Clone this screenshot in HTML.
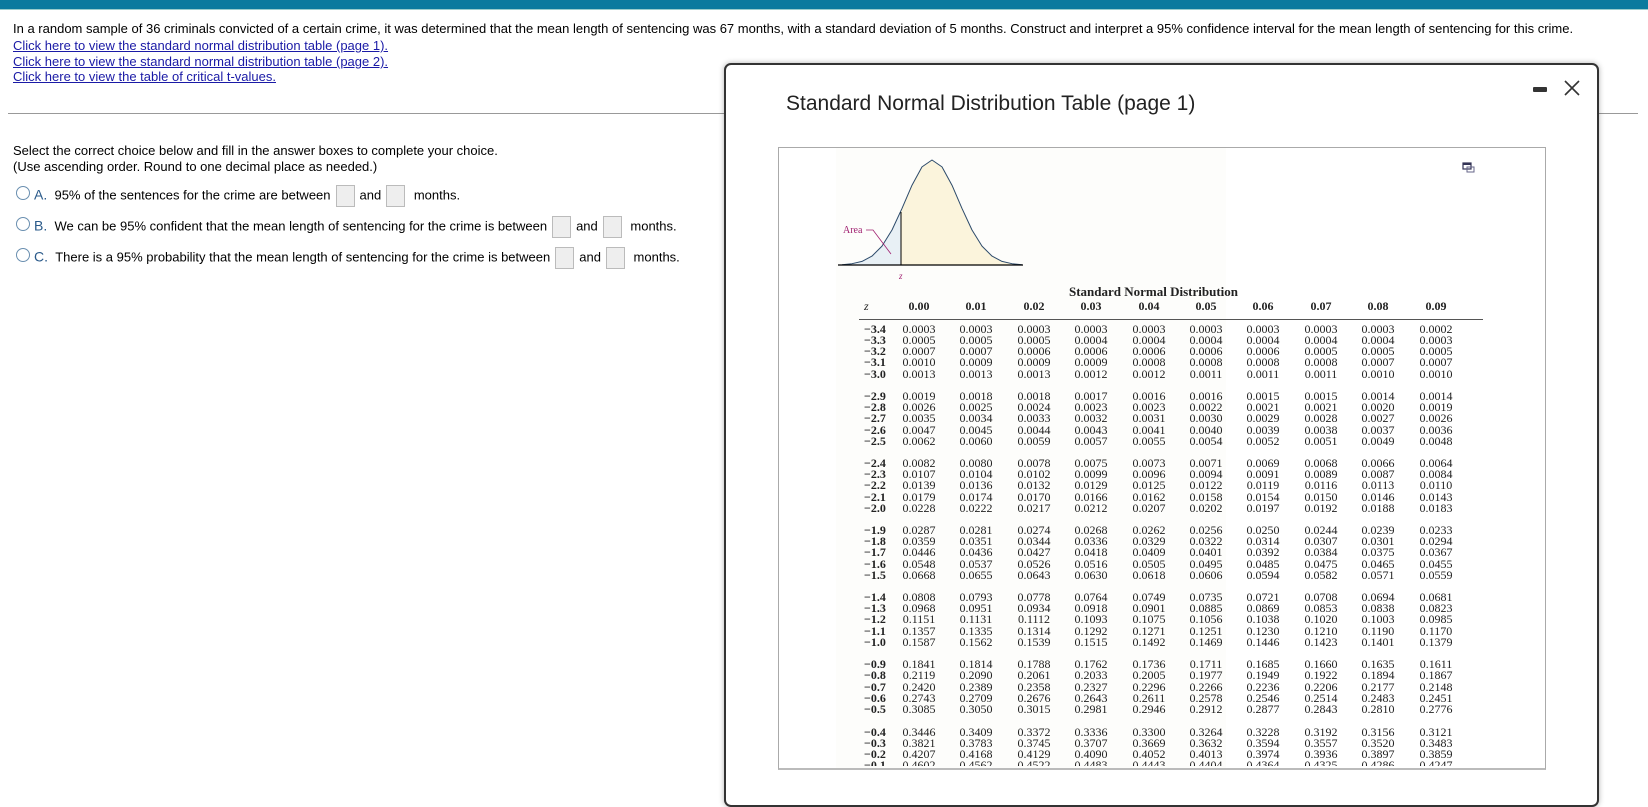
<!DOCTYPE html><html><head><meta charset="utf-8"><style>
body{margin:0;width:1648px;height:779px;overflow:hidden;background:#fff;font-family:"Liberation Sans",Arial,sans-serif;position:relative}
.bar{position:absolute;left:0;top:0;width:1648px;height:9px;background:#0b7a9e;border-bottom:1px solid #9cc}
.t{position:absolute;font-size:13px;line-height:15px;color:#000;white-space:nowrap}
a{color:#1a1aa6;text-decoration:underline}
.box{display:inline-block;width:17px;height:20px;border:1px solid #bbb;background:#eee;vertical-align:middle;margin:0 5px}
.rad{display:inline-block;width:12px;height:12px;border:1px solid #6a8fb0;border-radius:50%;vertical-align:-1px;margin-right:4px}
.lbl{color:#2a5a8a;font-size:14px}
.modal{position:absolute;left:724px;top:63px;width:871px;height:740px;border:2px solid #333;border-radius:7px;background:#fff;box-shadow:0 0 6px rgba(0,0,0,.3)}
.inner{position:absolute;left:778px;top:147px;width:766px;height:620px;border:1px solid #aaa;border-bottom:2px solid #bbb;background:#fff;overflow:hidden}
.r{position:absolute;left:0;width:760px;height:11px;font-family:"Liberation Serif",serif;font-size:12px;line-height:11px;color:#222;white-space:nowrap}
.r span{position:absolute;width:50px;text-align:center}
.r b{position:absolute;left:85px}
.r span:nth-of-type(1){left:115px}.r span:nth-of-type(2){left:172px}.r span:nth-of-type(3){left:230px}.r span:nth-of-type(4){left:287px}.r span:nth-of-type(5){left:345px}
.r span:nth-of-type(6){left:402px}.r span:nth-of-type(7){left:459px}.r span:nth-of-type(8){left:517px}.r span:nth-of-type(9){left:574px}.r span:nth-of-type(10){left:632px}
</style></head><body>
<div class="bar"></div>
<div class="t" style="left:13px;top:21px">In a random sample of 36 criminals convicted of a certain crime, it was determined that the mean length of sentencing was 67 months, with a standard deviation of 5 months. Construct and interpret a 95% confidence interval for the mean length of sentencing for this crime.</div>
<div class="t" style="left:13px;top:38px"><a>Click here to view the standard normal distribution table (page 1).</a></div>
<div class="t" style="left:13px;top:54px"><a>Click here to view the standard normal distribution table (page 2).</a></div>
<div class="t" style="left:13px;top:69px"><a>Click here to view the table of critical t-values.</a></div>
<div style="position:absolute;left:8px;top:113px;width:1630px;height:1px;background:#999"></div>
<div class="t" style="left:13px;top:143px">Select the correct choice below and fill in the answer boxes to complete your choice.</div>
<div class="t" style="left:13px;top:159px">(Use ascending order. Round to one decimal place as needed.)</div>
<div class="t" style="left:16px;top:185px"><span class="rad"></span><span class="lbl">A.</span>&nbsp;&nbsp;95% of the sentences for the crime are between<span class="box"></span>and<span class="box"></span>&nbsp;months.</div>
<div class="t" style="left:16px;top:216px"><span class="rad"></span><span class="lbl">B.</span>&nbsp;&nbsp;We can be 95% confident that the mean length of sentencing for the crime is between<span class="box"></span>and<span class="box"></span>&nbsp;months.</div>
<div class="t" style="left:16px;top:247px"><span class="rad"></span><span class="lbl">C.</span>&nbsp;&nbsp;There is a 95% probability that the mean length of sentencing for the crime is between<span class="box"></span>and<span class="box"></span>&nbsp;months.</div>
<div class="modal"></div>
<div class="t" style="left:786px;top:92px;font-size:21px;line-height:24px;color:#222">Standard Normal Distribution Table (page 1)</div>
<div style="position:absolute;left:1533px;top:87px;width:14px;height:5px;background:#333;border-radius:1px"></div>
<svg style="position:absolute;left:1563px;top:79px" width="18" height="18"><path d="M2 2L16 16M16 2L2 16" stroke="#333" stroke-width="1.6"/></svg>
<div class="inner">
<div style="position:absolute;left:57px;top:0;width:390px;height:620px;background:#fdfdfb"></div>
<svg style="position:absolute;left:683px;top:14px" width="14" height="12"><rect x="1" y="1" width="8" height="6" fill="none" stroke="#335" stroke-width="1.2"/><rect x="1" y="1" width="8" height="2" fill="#335"/><rect x="5" y="5" width="7" height="5" fill="none" stroke="#668" stroke-width="1"/></svg>
<svg style="position:absolute;left:0;top:0" width="260" height="150">
<path d="M73 117 L73 115.7 L83 113.4 L93 108.1 L103 98.1 L113 82 L123 60.4 L133 37.2 L143 18.9 L153 12 L163 18.9 L173 37.2 L183 60.4 L193 82 L203 98.1 L213 108.1 L223 113.4 L233 115.7 L233 117 Z" fill="#fbf4dc"/>
<path d="M73 117 L73 115.7 L83 113.4 L93 108.1 L103 98.1 L113 82 L122 63 L122 117 Z" fill="#e8f0f5"/>
<path d="M63 116.8 L73 115.7 L83 113.4 L93 108.1 L103 98.1 L113 82 L123 60.4 L133 37.2 L143 18.9 L153 12 L163 18.9 L173 37.2 L183 60.4 L193 82 L203 98.1 L213 108.1 L223 113.4 L233 115.7 L243 116.8" fill="none" stroke="#2c4a6a" stroke-width="1" stroke-linejoin="round"/>
<line x1="122" y1="64" x2="122" y2="117" stroke="#000" stroke-width="1"/>
<line x1="59" y1="117" x2="244" y2="117" stroke="#000" stroke-width="1.2"/>
<path d="M87 82 L94 82 L112 106" fill="none" stroke="#a02070" stroke-width="0.8"/>
<text x="64" y="85" font-family="Liberation Serif" font-size="10" fill="#a02070">Area</text>
<text x="120" y="131" font-family="Liberation Serif" font-size="9" font-style="italic" fill="#a02070">z</text>
</svg>
<div class="r" style="top:137px;left:290px;width:160px;text-align:center;font-weight:bold;font-size:13px;line-height:13px">Standard Normal Distribution</div>
<div class="r" style="top:153px;font-weight:bold"><i style="position:absolute;left:85px;font-weight:normal">z</i><span>0.00</span><span>0.01</span><span>0.02</span><span>0.03</span><span>0.04</span><span>0.05</span><span>0.06</span><span>0.07</span><span>0.08</span><span>0.09</span></div>
<div style="position:absolute;left:80px;top:171px;width:624px;height:1px;background:#555"></div>
<div class="r" style="top:176px"><b>−3.4</b><span>0.0003</span><span>0.0003</span><span>0.0003</span><span>0.0003</span><span>0.0003</span><span>0.0003</span><span>0.0003</span><span>0.0003</span><span>0.0003</span><span>0.0002</span></div>
<div class="r" style="top:187px"><b>−3.3</b><span>0.0005</span><span>0.0005</span><span>0.0005</span><span>0.0004</span><span>0.0004</span><span>0.0004</span><span>0.0004</span><span>0.0004</span><span>0.0004</span><span>0.0003</span></div>
<div class="r" style="top:198px"><b>−3.2</b><span>0.0007</span><span>0.0007</span><span>0.0006</span><span>0.0006</span><span>0.0006</span><span>0.0006</span><span>0.0006</span><span>0.0005</span><span>0.0005</span><span>0.0005</span></div>
<div class="r" style="top:209px"><b>−3.1</b><span>0.0010</span><span>0.0009</span><span>0.0009</span><span>0.0009</span><span>0.0008</span><span>0.0008</span><span>0.0008</span><span>0.0008</span><span>0.0007</span><span>0.0007</span></div>
<div class="r" style="top:221px"><b>−3.0</b><span>0.0013</span><span>0.0013</span><span>0.0013</span><span>0.0012</span><span>0.0012</span><span>0.0011</span><span>0.0011</span><span>0.0011</span><span>0.0010</span><span>0.0010</span></div>
<div class="r" style="top:243px"><b>−2.9</b><span>0.0019</span><span>0.0018</span><span>0.0018</span><span>0.0017</span><span>0.0016</span><span>0.0016</span><span>0.0015</span><span>0.0015</span><span>0.0014</span><span>0.0014</span></div>
<div class="r" style="top:254px"><b>−2.8</b><span>0.0026</span><span>0.0025</span><span>0.0024</span><span>0.0023</span><span>0.0023</span><span>0.0022</span><span>0.0021</span><span>0.0021</span><span>0.0020</span><span>0.0019</span></div>
<div class="r" style="top:265px"><b>−2.7</b><span>0.0035</span><span>0.0034</span><span>0.0033</span><span>0.0032</span><span>0.0031</span><span>0.0030</span><span>0.0029</span><span>0.0028</span><span>0.0027</span><span>0.0026</span></div>
<div class="r" style="top:277px"><b>−2.6</b><span>0.0047</span><span>0.0045</span><span>0.0044</span><span>0.0043</span><span>0.0041</span><span>0.0040</span><span>0.0039</span><span>0.0038</span><span>0.0037</span><span>0.0036</span></div>
<div class="r" style="top:288px"><b>−2.5</b><span>0.0062</span><span>0.0060</span><span>0.0059</span><span>0.0057</span><span>0.0055</span><span>0.0054</span><span>0.0052</span><span>0.0051</span><span>0.0049</span><span>0.0048</span></div>
<div class="r" style="top:310px"><b>−2.4</b><span>0.0082</span><span>0.0080</span><span>0.0078</span><span>0.0075</span><span>0.0073</span><span>0.0071</span><span>0.0069</span><span>0.0068</span><span>0.0066</span><span>0.0064</span></div>
<div class="r" style="top:321px"><b>−2.3</b><span>0.0107</span><span>0.0104</span><span>0.0102</span><span>0.0099</span><span>0.0096</span><span>0.0094</span><span>0.0091</span><span>0.0089</span><span>0.0087</span><span>0.0084</span></div>
<div class="r" style="top:332px"><b>−2.2</b><span>0.0139</span><span>0.0136</span><span>0.0132</span><span>0.0129</span><span>0.0125</span><span>0.0122</span><span>0.0119</span><span>0.0116</span><span>0.0113</span><span>0.0110</span></div>
<div class="r" style="top:344px"><b>−2.1</b><span>0.0179</span><span>0.0174</span><span>0.0170</span><span>0.0166</span><span>0.0162</span><span>0.0158</span><span>0.0154</span><span>0.0150</span><span>0.0146</span><span>0.0143</span></div>
<div class="r" style="top:355px"><b>−2.0</b><span>0.0228</span><span>0.0222</span><span>0.0217</span><span>0.0212</span><span>0.0207</span><span>0.0202</span><span>0.0197</span><span>0.0192</span><span>0.0188</span><span>0.0183</span></div>
<div class="r" style="top:377px"><b>−1.9</b><span>0.0287</span><span>0.0281</span><span>0.0274</span><span>0.0268</span><span>0.0262</span><span>0.0256</span><span>0.0250</span><span>0.0244</span><span>0.0239</span><span>0.0233</span></div>
<div class="r" style="top:388px"><b>−1.8</b><span>0.0359</span><span>0.0351</span><span>0.0344</span><span>0.0336</span><span>0.0329</span><span>0.0322</span><span>0.0314</span><span>0.0307</span><span>0.0301</span><span>0.0294</span></div>
<div class="r" style="top:399px"><b>−1.7</b><span>0.0446</span><span>0.0436</span><span>0.0427</span><span>0.0418</span><span>0.0409</span><span>0.0401</span><span>0.0392</span><span>0.0384</span><span>0.0375</span><span>0.0367</span></div>
<div class="r" style="top:411px"><b>−1.6</b><span>0.0548</span><span>0.0537</span><span>0.0526</span><span>0.0516</span><span>0.0505</span><span>0.0495</span><span>0.0485</span><span>0.0475</span><span>0.0465</span><span>0.0455</span></div>
<div class="r" style="top:422px"><b>−1.5</b><span>0.0668</span><span>0.0655</span><span>0.0643</span><span>0.0630</span><span>0.0618</span><span>0.0606</span><span>0.0594</span><span>0.0582</span><span>0.0571</span><span>0.0559</span></div>
<div class="r" style="top:444px"><b>−1.4</b><span>0.0808</span><span>0.0793</span><span>0.0778</span><span>0.0764</span><span>0.0749</span><span>0.0735</span><span>0.0721</span><span>0.0708</span><span>0.0694</span><span>0.0681</span></div>
<div class="r" style="top:455px"><b>−1.3</b><span>0.0968</span><span>0.0951</span><span>0.0934</span><span>0.0918</span><span>0.0901</span><span>0.0885</span><span>0.0869</span><span>0.0853</span><span>0.0838</span><span>0.0823</span></div>
<div class="r" style="top:466px"><b>−1.2</b><span>0.1151</span><span>0.1131</span><span>0.1112</span><span>0.1093</span><span>0.1075</span><span>0.1056</span><span>0.1038</span><span>0.1020</span><span>0.1003</span><span>0.0985</span></div>
<div class="r" style="top:478px"><b>−1.1</b><span>0.1357</span><span>0.1335</span><span>0.1314</span><span>0.1292</span><span>0.1271</span><span>0.1251</span><span>0.1230</span><span>0.1210</span><span>0.1190</span><span>0.1170</span></div>
<div class="r" style="top:489px"><b>−1.0</b><span>0.1587</span><span>0.1562</span><span>0.1539</span><span>0.1515</span><span>0.1492</span><span>0.1469</span><span>0.1446</span><span>0.1423</span><span>0.1401</span><span>0.1379</span></div>
<div class="r" style="top:511px"><b>−0.9</b><span>0.1841</span><span>0.1814</span><span>0.1788</span><span>0.1762</span><span>0.1736</span><span>0.1711</span><span>0.1685</span><span>0.1660</span><span>0.1635</span><span>0.1611</span></div>
<div class="r" style="top:522px"><b>−0.8</b><span>0.2119</span><span>0.2090</span><span>0.2061</span><span>0.2033</span><span>0.2005</span><span>0.1977</span><span>0.1949</span><span>0.1922</span><span>0.1894</span><span>0.1867</span></div>
<div class="r" style="top:534px"><b>−0.7</b><span>0.2420</span><span>0.2389</span><span>0.2358</span><span>0.2327</span><span>0.2296</span><span>0.2266</span><span>0.2236</span><span>0.2206</span><span>0.2177</span><span>0.2148</span></div>
<div class="r" style="top:545px"><b>−0.6</b><span>0.2743</span><span>0.2709</span><span>0.2676</span><span>0.2643</span><span>0.2611</span><span>0.2578</span><span>0.2546</span><span>0.2514</span><span>0.2483</span><span>0.2451</span></div>
<div class="r" style="top:556px"><b>−0.5</b><span>0.3085</span><span>0.3050</span><span>0.3015</span><span>0.2981</span><span>0.2946</span><span>0.2912</span><span>0.2877</span><span>0.2843</span><span>0.2810</span><span>0.2776</span></div>
<div class="r" style="top:579px"><b>−0.4</b><span>0.3446</span><span>0.3409</span><span>0.3372</span><span>0.3336</span><span>0.3300</span><span>0.3264</span><span>0.3228</span><span>0.3192</span><span>0.3156</span><span>0.3121</span></div>
<div class="r" style="top:590px"><b>−0.3</b><span>0.3821</span><span>0.3783</span><span>0.3745</span><span>0.3707</span><span>0.3669</span><span>0.3632</span><span>0.3594</span><span>0.3557</span><span>0.3520</span><span>0.3483</span></div>
<div class="r" style="top:601px"><b>−0.2</b><span>0.4207</span><span>0.4168</span><span>0.4129</span><span>0.4090</span><span>0.4052</span><span>0.4013</span><span>0.3974</span><span>0.3936</span><span>0.3897</span><span>0.3859</span></div>
<div class="r" style="top:612px;height:6px;overflow:hidden"><b>−0.1</b><span>0.4602</span><span>0.4562</span><span>0.4522</span><span>0.4483</span><span>0.4443</span><span>0.4404</span><span>0.4364</span><span>0.4325</span><span>0.4286</span><span>0.4247</span></div>
</div>
</body></html>
